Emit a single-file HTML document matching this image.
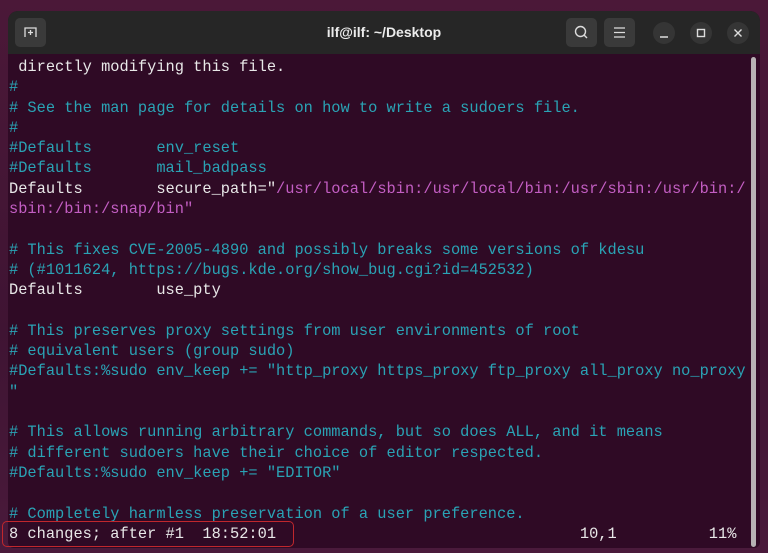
<!DOCTYPE html>
<html><head><style>
html,body{margin:0;padding:0;}
body{width:768px;height:553px;overflow:hidden;background:linear-gradient(180deg,#4b1838,#3f1433 60%,#4a1a3b);position:relative;font-family:"Liberation Sans",sans-serif;}
.win{position:absolute;left:8px;top:11px;width:752px;height:537px;background:#2f0a25;border-radius:10px 10px 6px 6px;overflow:hidden;}
.bar{position:absolute;left:0;top:0;right:0;height:43px;background:#262626;}
.btn{position:absolute;top:7px;width:31px;height:29px;background:#3a3a3a;border-radius:5px;}
.circ{position:absolute;top:11px;width:22px;height:22px;background:#353535;border-radius:50%;}
.title{position:absolute;left:0;right:0;top:13px;text-align:center;color:#ececec;font-size:14px;font-weight:bold;}
pre{position:absolute;left:1px;top:46px;margin:0;font-family:"Liberation Mono",monospace;font-size:15.35px;line-height:20.3px;color:#e8e8e8;}
.c{color:#2aa3b5}.s{color:#c35ec3}
.sb{position:absolute;left:743px;top:46px;width:5px;height:490px;background:#b5b1b3;border-radius:3px;}
.box{position:absolute;left:2px;top:521px;width:290px;height:24px;border:1.5px solid #c0272d;border-radius:5px;}
</style></head><body>
<div class="win">
<div class="bar">
 <div class="btn" style="left:7px"><svg width="31" height="29"><path d="M10 19V10h11v9M15.5 12v5M13 14.5h5" stroke="#ddd" stroke-width="1.3" fill="none"/></svg></div>
 <div class="title">ilf@ilf: ~/Desktop</div>
 <div class="btn" style="left:558px"><svg width="31" height="29"><circle cx="14.5" cy="13.5" r="5" stroke="#ddd" stroke-width="1.4" fill="none"/><path d="M18 17l3 3" stroke="#ddd" stroke-width="1.4"/></svg></div>
 <div class="btn" style="left:596px"><svg width="31" height="29"><path d="M10 10h11M10 14.5h11M10 19h11" stroke="#ddd" stroke-width="1.3"/></svg></div>
 <div class="circ" style="left:645px"><svg width="22" height="22"><path d="M7 15h8" stroke="#ddd" stroke-width="1.4"/></svg></div>
 <div class="circ" style="left:682px"><svg width="22" height="22"><rect x="7.5" y="7.5" width="7" height="7" stroke="#ddd" stroke-width="1.4" fill="none"/></svg></div>
 <div class="circ" style="left:719px"><svg width="22" height="22"><path d="M7.5 7.5l7 7M14.5 7.5l-7 7" stroke="#ddd" stroke-width="1.4"/></svg></div>
</div>
<pre> directly modifying this file.
<span class="c">#</span>
<span class="c"># See the man page for details on how to write a sudoers file.</span>
<span class="c">#</span>
<span class="c">#Defaults       env_reset</span>
<span class="c">#Defaults       mail_badpass</span>
Defaults        secure_path="<span class="s">/usr/local/sbin:/usr/local/bin:/usr/sbin:/usr/bin:/</span>
<span class="s">sbin:/bin:/snap/bin"</span>

<span class="c"># This fixes CVE-2005-4890 and possibly breaks some versions of kdesu</span>
<span class="c"># (#1011624, https://bugs.kde.org/show_bug.cgi?id=452532)</span>
Defaults        use_pty

<span class="c"># This preserves proxy settings from user environments of root</span>
<span class="c"># equivalent users (group sudo)</span>
<span class="c">#Defaults:%sudo env_keep += "http_proxy https_proxy ftp_proxy all_proxy no_proxy</span>
<span class="c">"</span>

<span class="c"># This allows running arbitrary commands, but so does ALL, and it means</span>
<span class="c"># different sudoers have their choice of editor respected.</span>
<span class="c">#Defaults:%sudo env_keep += "EDITOR"</span>

<span class="c"># Completely harmless preservation of a user preference.</span>
8 changes; after #1  18:52:01                                 10,1          11%</pre>
<div class="sb"></div>
</div>
<div class="box"></div>
</body></html>
